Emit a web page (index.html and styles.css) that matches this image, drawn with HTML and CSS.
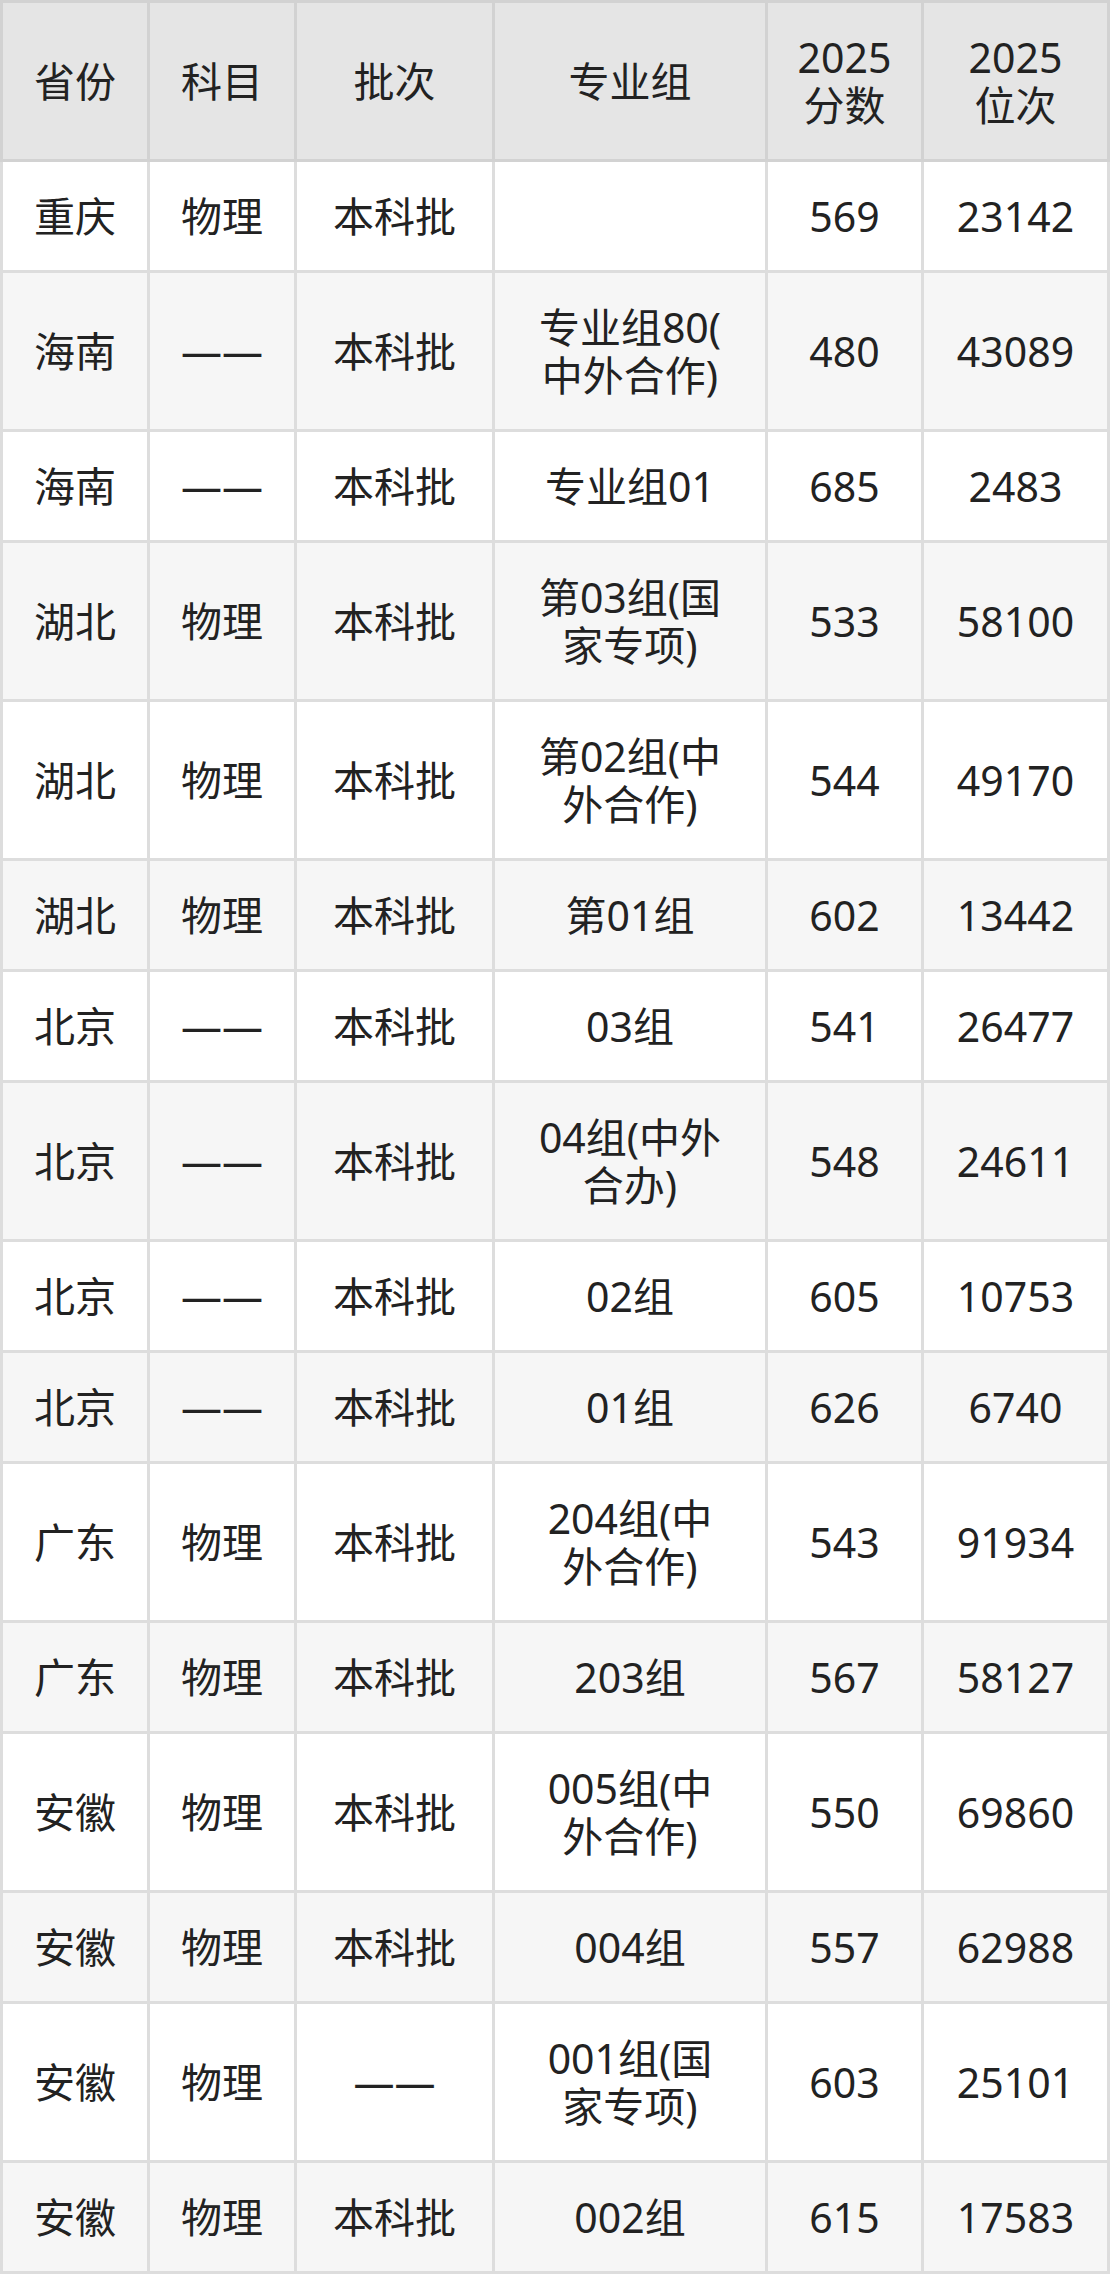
FILE: index.html
```html
<!DOCTYPE html>
<html lang="zh-CN">
<head>
<meta charset="utf-8">
<title>录取分数</title>
<link rel="stylesheet" href="styles.css">
</head>
<body>
<table class="score-table">
  <thead>
    <tr>
      <th class="c-prov">省份</th>
      <th class="c-subj">科目</th>
      <th class="c-batch">批次</th>
      <th class="c-group">专业组</th>
      <th class="c-score">2025<br>分数</th>
      <th class="c-rank">2025<br>位次</th>
    </tr>
  </thead>
  <tbody>
    <tr><td>重庆</td><td>物理</td><td>本科批</td><td></td><td>569</td><td>23142</td></tr>
    <tr><td>海南</td><td>——</td><td>本科批</td><td>专业组80(<br>中外合作)</td><td>480</td><td>43089</td></tr>
    <tr><td>海南</td><td>——</td><td>本科批</td><td>专业组01</td><td>685</td><td>2483</td></tr>
    <tr><td>湖北</td><td>物理</td><td>本科批</td><td>第03组(国<br>家专项)</td><td>533</td><td>58100</td></tr>
    <tr><td>湖北</td><td>物理</td><td>本科批</td><td>第02组(中<br>外合作)</td><td>544</td><td>49170</td></tr>
    <tr><td>湖北</td><td>物理</td><td>本科批</td><td>第01组</td><td>602</td><td>13442</td></tr>
    <tr><td>北京</td><td>——</td><td>本科批</td><td>03组</td><td>541</td><td>26477</td></tr>
    <tr><td>北京</td><td>——</td><td>本科批</td><td>04组(中外<br>合办)</td><td>548</td><td>24611</td></tr>
    <tr><td>北京</td><td>——</td><td>本科批</td><td>02组</td><td>605</td><td>10753</td></tr>
    <tr><td>北京</td><td>——</td><td>本科批</td><td>01组</td><td>626</td><td>6740</td></tr>
    <tr><td>广东</td><td>物理</td><td>本科批</td><td>204组(中<br>外合作)</td><td>543</td><td>91934</td></tr>
    <tr><td>广东</td><td>物理</td><td>本科批</td><td>203组</td><td>567</td><td>58127</td></tr>
    <tr><td>安徽</td><td>物理</td><td>本科批</td><td>005组(中<br>外合作)</td><td>550</td><td>69860</td></tr>
    <tr><td>安徽</td><td>物理</td><td>本科批</td><td>004组</td><td>557</td><td>62988</td></tr>
    <tr><td>安徽</td><td>物理</td><td>——</td><td>001组(国<br>家专项)</td><td>603</td><td>25101</td></tr>
    <tr><td>安徽</td><td>物理</td><td>本科批</td><td>002组</td><td>615</td><td>17583</td></tr>
  </tbody>
</table>
</body>
</html>
```
FILE: styles.css
```css
html, body {
  margin: 0;
  padding: 0;
  background: #ffffff;
}

.score-table {
  width: 1110px;
  table-layout: fixed;
  border-collapse: separate;
  border-spacing: 0;
  font-family: "Noto Sans", "Noto Sans CJK SC", sans-serif;
  font-size: 41px;
  line-height: 48px;
  color: #222222;
}

.score-table th,
.score-table td {
  box-sizing: border-box;
  padding: 30px 4px;
  text-align: center;
  vertical-align: middle;
  font-weight: normal;
  border-right: 3px solid #dddddd;
  border-bottom: 3px solid #dddddd;
}

.score-table th:first-child,
.score-table td:first-child {
  border-left: 3px solid #dddddd;
}

.score-table th {
  background: #e5e5e5;
  border-color: #d2d2d2;
  border-top: 3px solid #d2d2d2;
}

.score-table th:first-child {
  border-left-color: #d2d2d2;
}

.score-table tbody tr:nth-child(odd) td {
  background: #ffffff;
}

.score-table tbody tr:nth-child(even) td {
  background: #f6f6f6;
}

.c-prov { width: 150px; }
.c-subj { width: 147px; }
.c-batch { width: 198px; }
.c-group { width: 273px; }
.c-score { width: 156px; }
.c-rank { width: 186px; }
```
